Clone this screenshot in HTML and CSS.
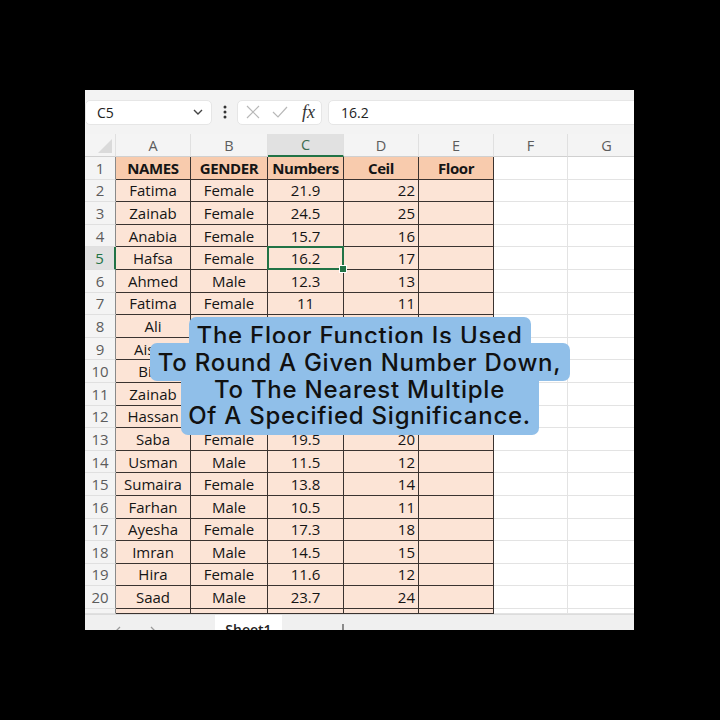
FILE: index.html
```html
<!DOCTYPE html>
<html>
<head>
<meta charset="utf-8">
<link rel="stylesheet" href="styles.css">
</head>
<body>
<div class="panel">
  <div class="toolbar">
    <div class="namebox"><span>C5</span>
      <svg class="chev" width="10" height="6" viewBox="0 0 10 6"><path d="M1 1 L5 5 L9 1" fill="none" stroke="#444" stroke-width="1.4"/></svg>
    </div>
    <div class="kebab"><svg width="4" height="14" viewBox="0 0 4 14"><circle cx="2" cy="2" r="1.5" fill="#333"/><circle cx="2" cy="7" r="1.5" fill="#333"/><circle cx="2" cy="12" r="1.5" fill="#333"/></svg></div>
    <div class="fxbox">
      <svg class="ic-x" width="14" height="14" viewBox="0 0 14 14"><path d="M1 1 L13 13 M13 1 L1 13" stroke="#b8b8b8" stroke-width="1.2" fill="none"/></svg>
      <svg class="ic-ok" width="16" height="12" viewBox="0 0 16 12"><path d="M1 6 L6 11 L15 1" stroke="#b8b8b8" stroke-width="1.2" fill="none"/></svg>
      <span class="fx">fx</span>
    </div>
    <div class="formula">16.2</div>
  </div>

  <div class="sheet">
    <div class="ch corner"><svg width="14" height="14" viewBox="0 0 14 14"><path d="M14 0 L14 14 L0 14 Z" fill="#dadada"/></svg></div>
    <div class="ch">A</div><div class="ch">B</div><div class="ch sel">C</div><div class="ch">D</div><div class="ch">E</div><div class="ch">F</div><div class="ch">G</div>

    <div class="rh">1</div><div class="t hd">NAMES</div><div class="t hd">GENDER</div><div class="t hd">Numbers</div><div class="t hd">Ceil</div><div class="t hd">Floor</div><div class="e"></div><div class="e"></div>
    <div class="rh">2</div><div class="t">Fatima</div><div class="t">Female</div><div class="t">21.9</div><div class="t r">22</div><div class="t"></div><div class="e"></div><div class="e"></div>
    <div class="rh">3</div><div class="t">Zainab</div><div class="t">Female</div><div class="t">24.5</div><div class="t r">25</div><div class="t"></div><div class="e"></div><div class="e"></div>
    <div class="rh">4</div><div class="t">Anabia</div><div class="t">Female</div><div class="t">15.7</div><div class="t r">16</div><div class="t"></div><div class="e"></div><div class="e"></div>
    <div class="rh rsel">5</div><div class="t">Hafsa</div><div class="t">Female</div><div class="t active">16.2</div><div class="t r">17</div><div class="t"></div><div class="e"></div><div class="e"></div>
    <div class="rh">6</div><div class="t">Ahmed</div><div class="t">Male</div><div class="t">12.3</div><div class="t r">13</div><div class="t"></div><div class="e"></div><div class="e"></div>
    <div class="rh">7</div><div class="t">Fatima</div><div class="t">Female</div><div class="t">11</div><div class="t r">11</div><div class="t"></div><div class="e"></div><div class="e"></div>
    <div class="rh">8</div><div class="t">Ali</div><div class="t"></div><div class="t"></div><div class="t r"></div><div class="t"></div><div class="e"></div><div class="e"></div>
    <div class="rh">9</div><div class="t">Aisha</div><div class="t"></div><div class="t"></div><div class="t r"></div><div class="t"></div><div class="e"></div><div class="e"></div>
    <div class="rh">10</div><div class="t">Bilal</div><div class="t"></div><div class="t"></div><div class="t r"></div><div class="t"></div><div class="e"></div><div class="e"></div>
    <div class="rh">11</div><div class="t">Zainab</div><div class="t"></div><div class="t"></div><div class="t r"></div><div class="t"></div><div class="e"></div><div class="e"></div>
    <div class="rh">12</div><div class="t">Hassan</div><div class="t"></div><div class="t"></div><div class="t r"></div><div class="t"></div><div class="e"></div><div class="e"></div>
    <div class="rh">13</div><div class="t">Saba</div><div class="t">Female</div><div class="t">19.5</div><div class="t r">20</div><div class="t"></div><div class="e"></div><div class="e"></div>
    <div class="rh">14</div><div class="t">Usman</div><div class="t">Male</div><div class="t">11.5</div><div class="t r">12</div><div class="t"></div><div class="e"></div><div class="e"></div>
    <div class="rh">15</div><div class="t">Sumaira</div><div class="t">Female</div><div class="t">13.8</div><div class="t r">14</div><div class="t"></div><div class="e"></div><div class="e"></div>
    <div class="rh">16</div><div class="t">Farhan</div><div class="t">Male</div><div class="t">10.5</div><div class="t r">11</div><div class="t"></div><div class="e"></div><div class="e"></div>
    <div class="rh">17</div><div class="t">Ayesha</div><div class="t">Female</div><div class="t">17.3</div><div class="t r">18</div><div class="t"></div><div class="e"></div><div class="e"></div>
    <div class="rh">18</div><div class="t">Imran</div><div class="t">Male</div><div class="t">14.5</div><div class="t r">15</div><div class="t"></div><div class="e"></div><div class="e"></div>
    <div class="rh">19</div><div class="t">Hira</div><div class="t">Female</div><div class="t">11.6</div><div class="t r">12</div><div class="t"></div><div class="e"></div><div class="e"></div>
    <div class="rh">20</div><div class="t">Saad</div><div class="t">Male</div><div class="t">23.7</div><div class="t r">24</div><div class="t"></div><div class="e"></div><div class="e"></div>
    <div class="rh"></div><div class="t"></div><div class="t"></div><div class="t"></div><div class="t"></div><div class="t"></div><div class="e"></div><div class="e"></div>
  </div>

  <div class="tabs">
    <svg class="nav first" width="8" height="12" viewBox="0 0 8 12"><path d="M6 1 L1 6 L6 11" fill="none" stroke="#9a9a9a" stroke-width="1.3"/></svg>
    <svg class="nav" width="8" height="12" viewBox="0 0 8 12"><path d="M2 1 L7 6 L2 11" fill="none" stroke="#9a9a9a" stroke-width="1.3"/></svg>
    <div class="tab">Sheet1</div>
    <svg class="plus" width="14" height="14" viewBox="0 0 14 14"><path d="M7 0 L7 14 M0 7 L14 7" stroke="#555" stroke-width="1.3"/></svg>
  </div>

  <div class="caption">
    <div class="cap c1">The Floor Function Is Used</div>
    <div class="cap c2">To Round A Given Number Down,</div>
    <div class="cap c3">To The Nearest Multiple<br>Of A Specified Significance.</div>
  </div>
</div>
</body>
</html>
```

FILE: styles.css
```css
* { box-sizing: border-box; }
html, body { margin: 0; padding: 0; background: #000; }
body {
  width: 720px; height: 720px; overflow: hidden; position: relative;
  font-family: "Open Sans", "Noto Sans", sans-serif;
}
.panel {
  position: relative;
  margin: 90px 0 0 85px;
  width: 549px; height: 540px;
  background: #fff;
  overflow: hidden;
  display: flex; flex-direction: column;
}
.toolbar {
  height: 44px; flex: none;
  background: #f3f3f3;
  display: flex; align-items: center;
}
.namebox {
  width: 127px; height: 25px; flex: none;
  background: #fff; border: 1px solid #e6e6e6; border-radius: 5px;
  display: flex; align-items: center; justify-content: space-between;
  padding: 0 8px 0 11px;
  font-size: 14px; color: #222;
}
.kebab { width: 25px; flex: none; display: flex; justify-content: center; align-items: center; }
.fxbox {
  width: 85px; height: 25px; flex: none;
  background: #fff; border: 1px solid #e6e6e6; border-radius: 5px;
  display: flex; align-items: center;
}
.ic-x { margin-left: 8px; }
.ic-ok { margin-left: 12px; }
.fx {
  margin-left: 14px;
  font-family: "Liberation Serif", "DejaVu Serif", serif;
  font-style: italic; font-size: 18px; color: #333;
}
.formula {
  flex: 1; margin-left: 6px; margin-right: -6px; height: 25px;
  background: #fff; border: 1px solid #e6e6e6; border-radius: 5px;
  display: flex; align-items: center; padding-left: 12px;
  font-size: 14px; color: #222;
}

.sheet {
  flex: none;
  display: grid;
  grid-template-columns: 31px 75px 77px 76px 75px 75px 74px 78px;
  grid-template-rows: 23px repeat(20, 22.6px) 5px;
  font-size: 15px;
}
.sheet > div {
  display: flex; align-items: center; justify-content: center;
  white-space: nowrap; overflow: hidden;
}
.ch {
  background: #f4f4f4;
  border-right: 1px solid #e0e0e0; border-bottom: 1px solid #d0d0d0;
  color: #5c5c5c; font-size: 14.5px;
}
.sheet > .ch.corner { justify-content: flex-end; align-items: flex-end; padding: 0 3px 3px 0; }
.ch.sel { background: #e1e1e1; border-bottom: 2px solid #217346; color: #3d6b50; }
.rh {
  background: #f4f4f4;
  border-right: 1px solid #8a8a8a; border-bottom: 1px solid #e0e0e0;
  color: #5c5c5c;
}
.rh.rsel { background: #e1e1e1; border-right: 2px solid #217346; color: #217346; }
.t {
  background: #fce4d6;
  border-right: 1px solid #3a3330; border-bottom: 1px solid #3a3330;
  color: #151515;
}
.t.hd { background: #f8cbad; font-weight: 700; letter-spacing: -0.4px; }
.sheet > .t.r { justify-content: flex-end; padding-right: 3px; }
.sheet > .t.active { position: relative; overflow: visible; z-index: 2; }
.t.active::after {
  content: ""; position: absolute; left: -1px; top: -1px; right: -1px; bottom: -1px;
  border: 2px solid #217346;
}
.t.active::before {
  content: ""; position: absolute; right: -4px; bottom: -4px;
  width: 6px; height: 6px; background: #217346; border: 1px solid #fff; z-index: 3;
}
.e { border-right: 1px solid #e3e3e3; border-bottom: 1px solid #e3e3e3; }

.tabs {
  flex: 1;
  background: #f0f0f0; border-top: 1px solid #dcdcdc;
  display: flex; align-items: flex-start;
}
.nav { margin-top: 11px; margin-left: 27px; flex: none; }
.nav.first { margin-left: 29px; }
.tab {
  margin-left: 58px; width: 67px; height: 30px; flex: none;
  background: #fff;
  text-align: center; padding-top: 5px;
  font-size: 14px; font-weight: 600; color: #222;
}
.plus { margin-left: 54px; margin-top: 9px; flex: none; }

.caption {
  position: absolute; left: 0; right: 0; top: 227px;
  display: flex; flex-direction: column; align-items: center;
  font-family: "Inter", "Open Sans", sans-serif;
  font-weight: 500; font-size: 24px; line-height: 26px; letter-spacing: 0.75px;
  color: #111; text-align: center;
}
.cap { background: #90bfe9; border-radius: 7px; white-space: nowrap; }
.c1 { width: 342px; padding: 6px 0 4px; }
.c2 { width: 420px; padding: 7px 0 5px; margin-top: -10px; }
.c3 { width: 358px; padding: 4px 0 6px; margin-top: -8px; }
```
